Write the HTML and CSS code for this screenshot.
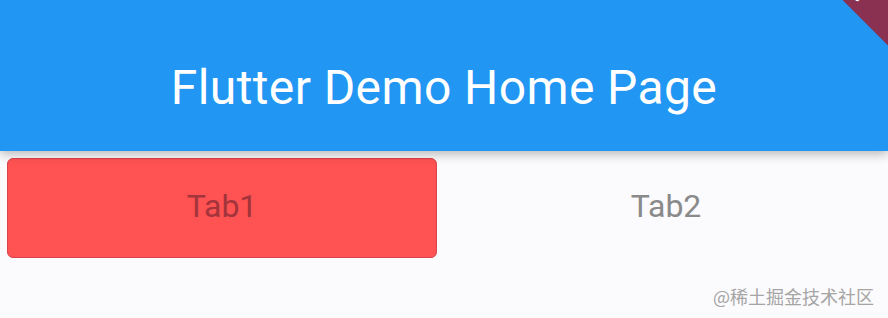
FILE: index.html
```html
<!DOCTYPE html>
<html>
<head>
<meta charset="utf-8">
<link rel="stylesheet" href="styles.css">
</head>
<body>
<div class="app">
  <header class="appbar">
    <h1 class="title">Flutter Demo Home Page</h1>
  </header>
  <nav class="tabs">
    <div class="tab active"><span>Tab1</span></div>
    <div class="tab"><span>Tab2</span></div>
  </nav>
  <div class="footer">@稀土掘金技术社区</div>
  <div class="debug"><span>DEBUG</span></div>
</div>
</body>
</html>
```
FILE: styles.css
```css
html, body {
  margin: 0;
  padding: 0;
}
body {
  background: #fbfafc;
  font-family: Roboto, "Noto Sans", sans-serif;
}
.app {
  position: relative;
  width: 888px;
  height: 318px;
  overflow: hidden;
  display: flex;
  flex-direction: column;
}
.appbar {
  height: 151px;
  background: #2196f3;
  box-shadow: 0 3px 10px rgba(0, 0, 0, 0.28);
  display: flex;
  align-items: flex-end;
  justify-content: center;
  position: relative;
  z-index: 1;
}
.title {
  margin: 0 0 35px 0;
  color: #fff;
  font-weight: 400;
  font-size: 48px;
  line-height: 56px;
  letter-spacing: 0.4px;
}
.tabs {
  display: grid;
  grid-template-columns: 1fr 1fr;
  padding-top: 7px;
}
.tab {
  height: 100px;
  display: flex;
  align-items: center;
  justify-content: center;
  padding-bottom: 4px;
  font-size: 32px;
  color: #8a8a8a;
  margin: 0 7px;
  box-sizing: border-box;
}
.tab.active {
  background: #ff5252;
  border: 1px solid #d9434b;
  border-radius: 6px;
  color: #a3343b;
}
.footer {
  align-self: flex-end;
  margin: 27px 14px 0 0;
  font-family: "Noto Sans CJK SC", sans-serif;
  font-size: 18px;
  color: #a5a5a5;
  line-height: 22px;
}
.debug {
  position: absolute;
  top: 0;
  left: 0;
  width: 200px;
  height: 36px;
  background: #8a3050;
  transform-origin: center;
  transform: translate(746px, -40px) rotate(45deg);
  z-index: 2;
  display: flex;
  align-items: flex-end;
  justify-content: center;
  color: #fff;
  font-size: 13px;
  line-height: 12px;
  font-weight: 700;
}
.debug span {
  margin: 0 0 7px 10px;
}
```
